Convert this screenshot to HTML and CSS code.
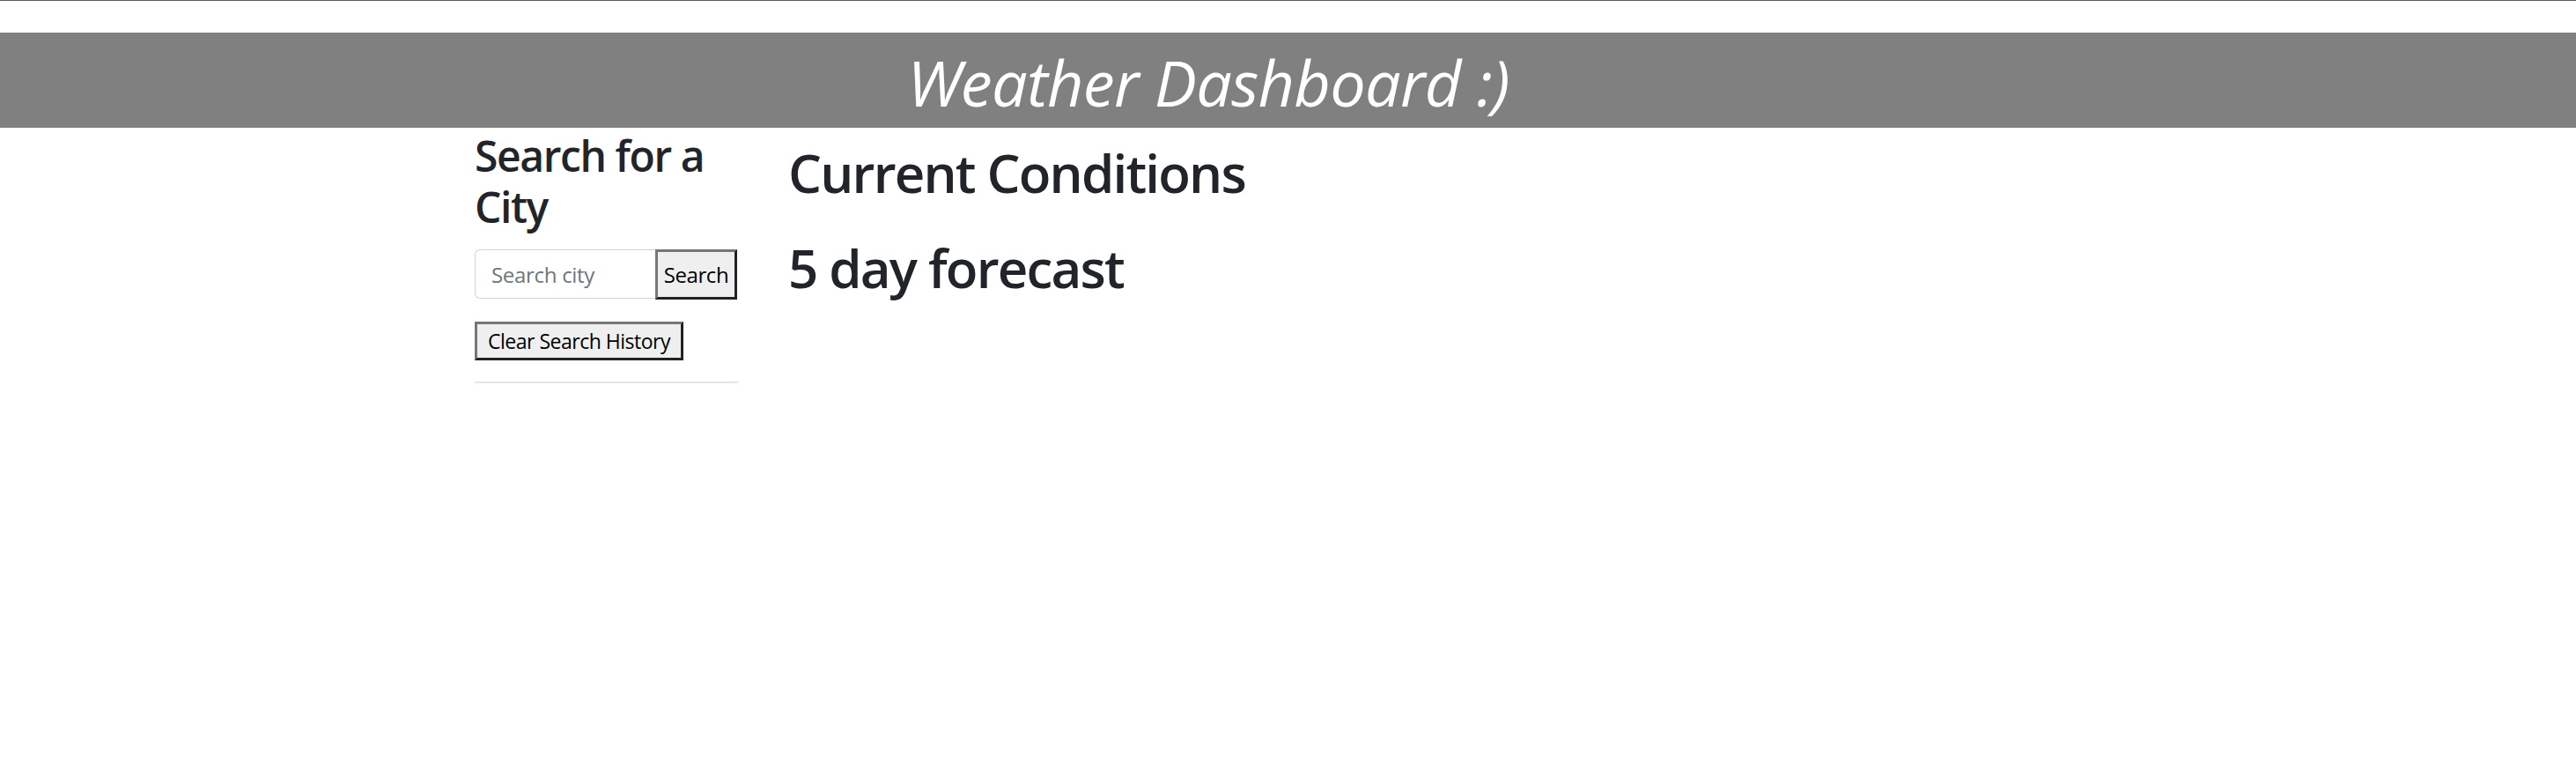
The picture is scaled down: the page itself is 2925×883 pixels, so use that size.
FILE: index.html
```html
<!DOCTYPE html>
<html lang="en">
<head>
<meta charset="utf-8">
<title>Weather Dashboard</title>
<link rel="stylesheet" href="styles.css">
</head>
<body>
<div class="topline"></div>
<header class="banner">
  <h1 class="banner-title">Weather Dashboard :)</h1>
</header>
<div class="layout">
  <aside class="sidebar">
    <h2 class="side-title">Search for a City</h2>
    <form class="search-group">
      <input class="search-input" type="text" placeholder="Search city">
      <button class="btn search-btn" type="button">Search</button>
    </form>
    <button class="btn clear-btn" type="button">Clear Search History</button>
    <hr class="divider">
  </aside>
  <main class="content">
    <h1 class="section-title">Current Conditions</h1>
    <h1 class="section-title forecast-title">5 day forecast</h1>
  </main>
</div>
</body>
</html>
```

FILE: styles.css
```css
* { box-sizing: border-box; }

body {
  margin: 0;
  font-family: "Open Sans", "Noto Sans", sans-serif;
  color: #212529;
  background: #fff;
}

.topline {
  height: 1px;
  background: #5a5a5a;
  margin-bottom: 36px;
}

.banner {
  background: #808080;
  height: 108px;
}

.banner-title {
  margin: 0;
  padding-top: 13px;
  padding-right: 181px;
  text-align: center;
  font-style: italic;
  font-weight: 400;
  font-size: 72px;
  line-height: 1.2;
  letter-spacing: -0.7px;
  color: #fff;
}

.layout {
  display: flex;
  padding-left: 539px;
  gap: 57px;
}

.sidebar {
  width: 299px;
  flex: 0 0 299px;
}

.side-title {
  margin: 3px 0 20px;
  font-size: 48px;
  font-weight: 600;
  line-height: 1.2;
  letter-spacing: -1.4px;
}

.search-group {
  display: flex;
  margin: 0 0 25px;
}

.search-input {
  width: 205px;
  height: 56px;
  padding: 0 18px;
  border: 1.5px solid #ced4da;
  border-right: none;
  border-radius: 6px 0 0 6px;
  font-family: inherit;
  font-size: 24px;
  letter-spacing: -0.3px;
  color: #495057;
}

.search-input::placeholder { color: #6c757d; }

.btn {
  font-family: inherit;
  background: #efefef;
  color: #000;
  border-style: solid;
  border-width: 3px;
  border-color: #767676 #222 #222 #767676;
  padding: 0 4px;
  cursor: pointer;
}

.search-btn {
  height: 57px;
  width: 93px;
  font-size: 24px;
  letter-spacing: -0.4px;
}

.clear-btn {
  height: 44px;
  width: 237px;
  font-size: 23px;
  letter-spacing: -0.5px;
  display: block;
  padding: 0;
}

.divider {
  margin: 24px 0 0;
  border: 0;
  border-top: 2px solid #e6e6e6;
}

.content {
  padding-top: 15px;
}

.section-title {
  margin: 0 0 36px;
  font-size: 60px;
  font-weight: 600;
  line-height: 1.2;
  letter-spacing: -1.8px;
}
```
